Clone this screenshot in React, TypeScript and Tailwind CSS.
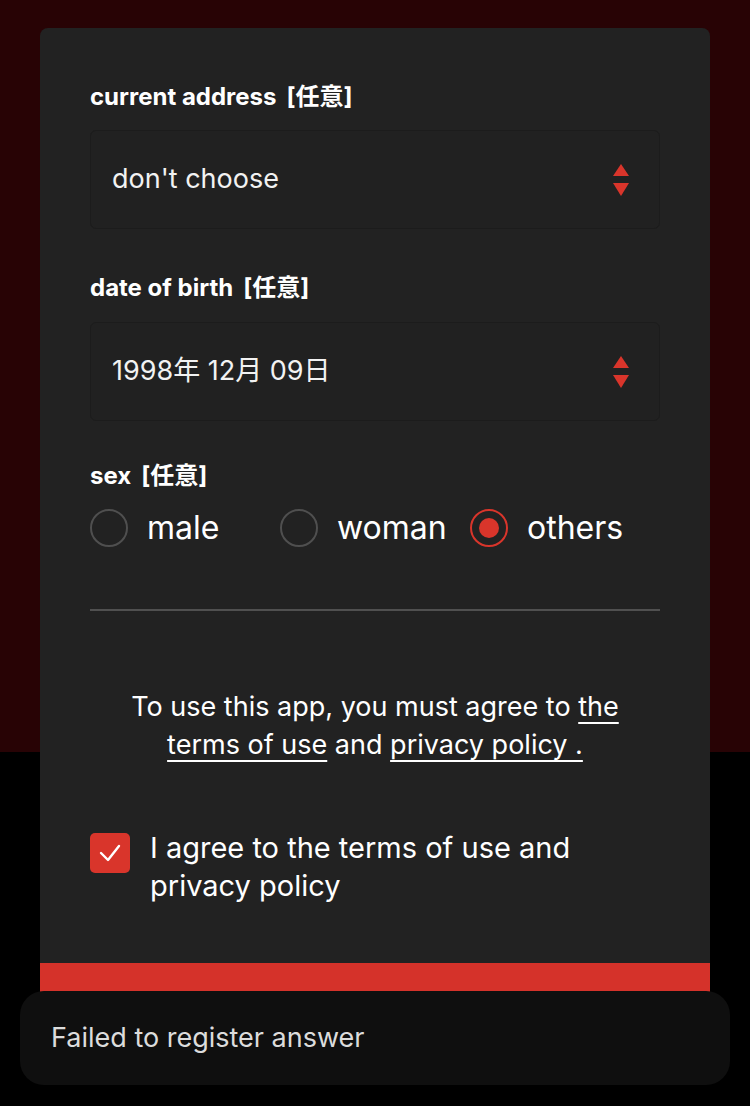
import React from "react";

const font = { fontFamily: 'Inter, "Noto Sans CJK JP", sans-serif' };

function Arrows() {
  return (
    <svg width="18" height="36" viewBox="0 0 18 36" className="shrink-0">
      <polygon points="9,2 17,14 1,14" fill="#d9352b" />
      <polygon points="1,21 17,21 9,34" fill="#d9352b" />
    </svg>
  );
}

function Select({ value }: { value: string }) {
  return (
    <div className="flex h-[99px] items-center justify-between rounded-md border border-[#1c1c1c] bg-[#212121] pl-[21px] pr-[29px]">
      <span className="text-[27px] text-[#f2f2f2]">{value}</span>
      <Arrows />
    </div>
  );
}

function Label({ text }: { text: string }) {
  return (
    <div className="text-[24px] font-bold leading-[28px] text-white">
      {text}
      <span className="ml-[10px]">[任意]</span>
    </div>
  );
}

function Radio({ label, checked }: { label: string; checked?: boolean }) {
  return (
    <div className="flex items-center gap-[19px]">
      <div
        className={
          checked
            ? "flex h-[38px] w-[38px] items-center justify-center rounded-full border-2 border-[#d9352b]"
            : "h-[38px] w-[38px] rounded-full border-2 border-[#4f4f4f]"
        }
      >
        {checked && <div className="h-[20px] w-[20px] rounded-full bg-[#d9352b]" />}
      </div>
      <span className="text-[32px] leading-[38px] text-white">{label}</span>
    </div>
  );
}

export default function App() {
  return (
    <div
      style={font}
      className="relative h-[1106px] w-[750px] overflow-hidden bg-[linear-gradient(to_bottom,#280305_0px,#280305_752px,#000000_752px)] pt-[28px]"
    >
      <div className="mx-[40px] overflow-hidden rounded-t-lg bg-[#222222]">
        <div className="px-[50px] pt-[55px]">
          <Label text="current address" />
          <div className="mt-[19px]">
            <Select value="don't choose" />
          </div>
          <div className="mt-[45px]">
            <Label text="date of birth" />
          </div>
          <div className="mt-[20px]">
            <Select value="1998年 12月 09日" />
          </div>
          <div className="mt-[41px]">
            <Label text="sex" />
          </div>
          <div className="mt-[19px] grid grid-cols-3">
            <Radio label="male" />
            <Radio label="woman" />
            <Radio label="others" checked />
          </div>
          <div className="mt-[62px] h-[2px] bg-[#505050]" />
          <p className="mx-auto mt-[77px] w-[530px] text-center text-[27px] leading-[38px] text-white">
            To use this app, you must agree to{" "}
            <span className="underline decoration-2 underline-offset-[6px]">the terms of use</span> and{" "}
            <span className="underline decoration-2 underline-offset-[6px]">privacy policy .</span>
          </p>
          <div className="mt-[65px] flex items-start gap-[20px]">
            <div className="mt-[4px] flex h-[40px] w-[40px] shrink-0 items-center justify-center rounded-[5px] bg-[#d9352b]">
              <svg width="24" height="20" viewBox="0 0 24 20">
                <polyline points="3,10 10,17 21,3" fill="none" stroke="white" strokeWidth="2.4" strokeLinecap="round" strokeLinejoin="round" />
              </svg>
            </div>
            <p className="text-[29px] leading-[38px] text-white">
              I agree to the terms of use and
              <br />
              privacy policy
            </p>
          </div>
        </div>
        <div className="mt-[58px] h-[100px] bg-[#d5322a]" />
      </div>

      <div className="absolute bottom-[21px] left-[20px] right-[20px] flex h-[94px] items-center rounded-[24px] bg-[#0f0f0f] px-[31px]">
        <span className="text-[27px] text-[#dcdcdc]">Failed to register answer</span>
      </div>
    </div>
  );
}
